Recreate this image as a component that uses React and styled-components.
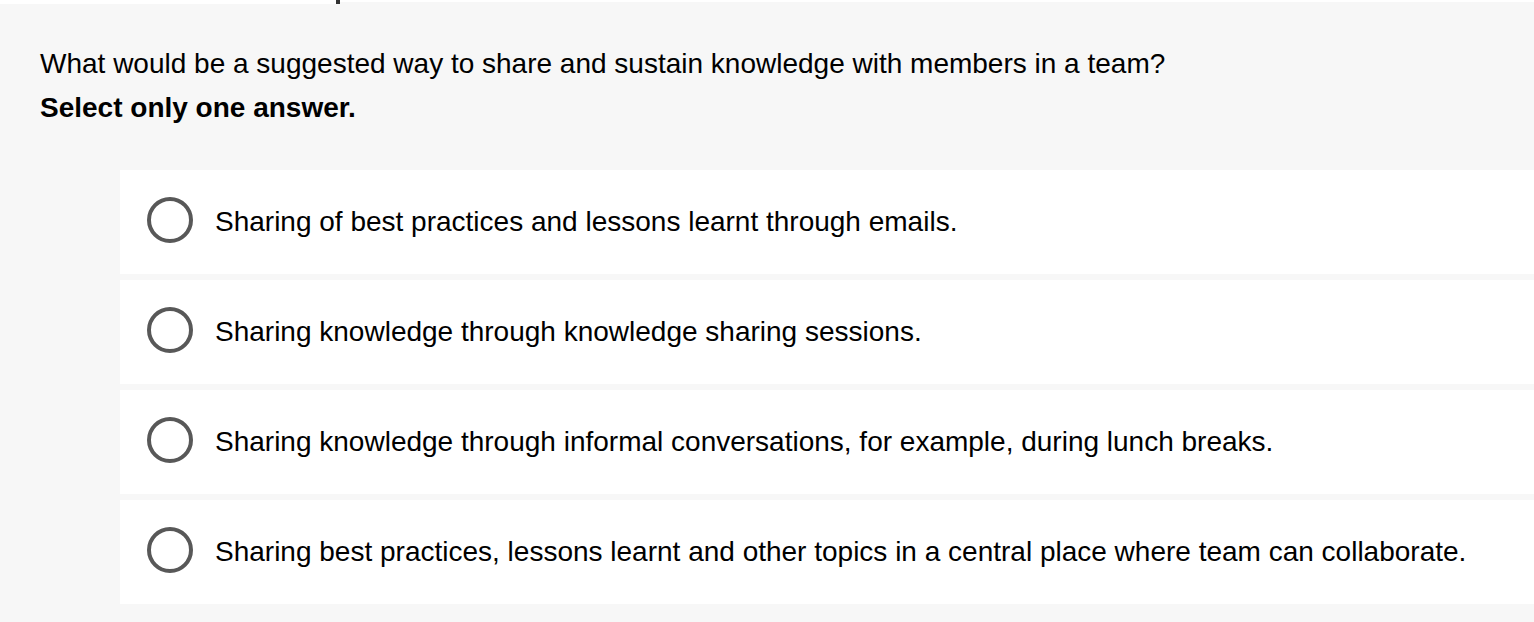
import React from "react";
import styled, { createGlobalStyle } from "styled-components";

const GlobalStyle = createGlobalStyle`
  html, body {
    margin: 0;
    padding: 0;
    background: #f7f7f7;
  }
  body {
    font-family: "Liberation Sans", Arial, sans-serif;
    color: #000;
  }
`;

const TopStrip = styled.div`
  display: flex;
  align-items: flex-start;
  height: 4px;
`;

const StripPart = styled.div`
  height: ${(p) => p.h}px;
  width: ${(p) => (p.w ? `${p.w}px` : "auto")};
  flex: ${(p) => (p.w ? "none" : "1")};
  background: ${(p) => p.bg};
`;

const Page = styled.div`
  padding: 38px 0 18px 40px;
`;

const Question = styled.div`
  font-size: 28px;
  line-height: 44px;
`;

const Hint = styled.div`
  font-size: 28px;
  line-height: 44px;
  font-weight: bold;
`;

const Options = styled.div`
  margin: 40px 0 0 80px;
  display: flex;
  flex-direction: column;
  gap: 6px;
`;

const Option = styled.label`
  display: flex;
  align-items: center;
  height: 104px;
  padding-left: 27px;
  background: #fff;
  cursor: pointer;
`;

const Radio = styled.span`
  box-sizing: border-box;
  width: 46px;
  height: 46px;
  border-radius: 50%;
  border: 4px solid #585858;
  filter: blur(0.7px);
  flex: none;
  margin-top: -4px;
`;

const OptionText = styled.span`
  margin-left: 22px;
  font-size: 28px;
`;

const answers = [
  "Sharing of best practices and lessons learnt through emails.",
  "Sharing knowledge through knowledge sharing sessions.",
  "Sharing knowledge through informal conversations, for example, during lunch breaks.",
  "Sharing best practices, lessons learnt and other topics in a central place where team can collaborate.",
];

export default function App() {
  return (
    <>
      <GlobalStyle />
      <TopStrip>
        <StripPart w={336} h={4} bg="#ffffff" />
        <StripPart w={4} h={4} bg="#333333" />
        <StripPart h={2} bg="#ffffff" />
      </TopStrip>
      <Page>
        <Question>
          What would be a suggested way to share and sustain knowledge with
          members in a team?
        </Question>
        <Hint>Select only one answer.</Hint>
        <Options>
          {answers.map((a) => (
            <Option key={a}>
              <Radio />
              <OptionText>{a}</OptionText>
            </Option>
          ))}
        </Options>
      </Page>
    </>
  );
}
